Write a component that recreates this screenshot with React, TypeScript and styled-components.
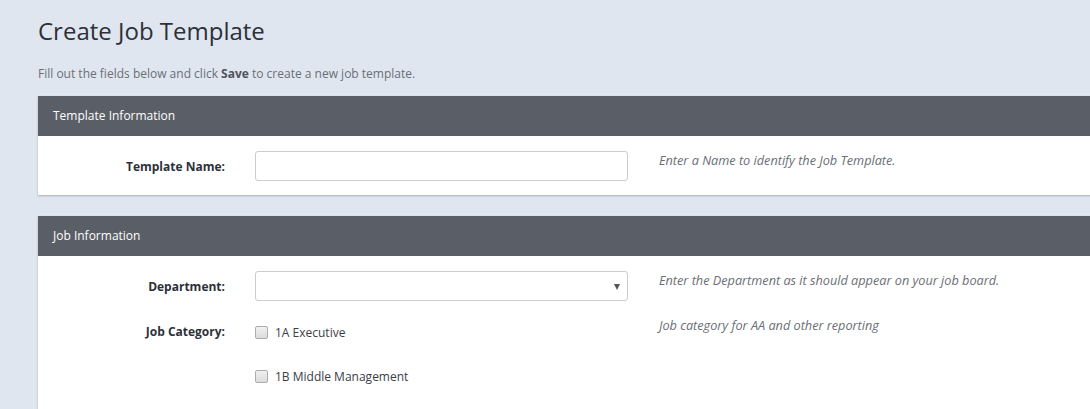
import React from 'react'
import styled, { createGlobalStyle } from 'styled-components'

const GlobalStyle = createGlobalStyle`
  html, body { margin: 0; padding: 0; background: #dfe6ef; overflow: hidden; }
  body { font-family: "Open Sans", "Liberation Sans", sans-serif; color: #333; }
  * { box-sizing: border-box; }
`

const Page = styled.div`
  padding: 14px 0 0 38px;
  width: 1110px;
`

const Title = styled.h1`
  margin: 0;
  font-size: 24px;
  font-weight: 400;
  line-height: 34px;
  color: #2d3038;
`

const Intro = styled.p`
  margin: 17px 0 13px;
  font-size: 12px;
  line-height: 18px;
  color: #6b6f76;
  b { color: #50545b; font-weight: 700; }
`

const Panel = styled.section`
  background: #fff;
  margin-bottom: 21px;
  box-shadow: 0 1px 2px rgba(0, 0, 0, 0.25);
`

const PanelHeader = styled.header`
  height: 40px;
  background: #5a5e66;
  color: #fff;
  font-size: 12px;
  line-height: 40px;
  padding-left: 15px;
`

const PanelBody = styled.div<{ $bottom?: number }>`
  padding: 15px 0 ${p => p.$bottom ?? 14}px;
`

const Row = styled.div<{ $tall?: boolean }>`
  display: flex;
  align-items: ${p => (p.$tall ? 'flex-start' : 'center')};
  min-height: 30px;
  margin-bottom: 15px;
  &:last-child { margin-bottom: 0; }
`

const Label = styled.label`
  width: 187px;
  text-align: right;
  font-size: 12px;
  font-weight: 700;
  color: #2d3038;
  flex-shrink: 0;
`

const Field = styled.div`
  width: 373px;
  margin-left: 30px;
  flex-shrink: 0;
  position: relative;
`

const TextInput = styled.input`
  width: 100%;
  height: 30px;
  border: 1px solid #c9ccd0;
  border-radius: 3px;
  background: #fff;
  font: inherit;
  outline: none;
`

const Select = styled.div`
  width: 100%;
  height: 30px;
  border: 1px solid #c9ccd0;
  border-radius: 3px;
  background: #fff;
  position: relative;
  &::after {
    content: '';
    position: absolute;
    right: 7px;
    top: 12px;
    border-left: 3px solid transparent;
    border-right: 3px solid transparent;
    border-top: 6px solid #555;
  }
`

const Help = styled.div`
  margin-left: 31px;
  font-size: 12.7px;
  font-style: italic;
  color: #6b6f76;
  align-self: flex-start;
`

const CheckList = styled.div`
  display: flex;
  flex-direction: column;
  gap: 26px;
  padding-top: 7px;
`

const CheckItem = styled.label`
  display: flex;
  align-items: center;
  gap: 7px;
  font-size: 12px;
  color: #3a3e45;
  height: 18px;
`

const Box = styled.span`
  width: 13px;
  height: 13px;
  border: 1px solid #a9acb0;
  border-radius: 2px;
  background: linear-gradient(#f0f0f0, #dcdcdc);
  flex-shrink: 0;
`

const CatLabel = styled(Label)`
  line-height: 18px;
  padding-top: 7px;
`

export default function App() {
  return (
    <>
      <GlobalStyle />
      <Page>
        <Title>Create Job Template</Title>
        <Intro>
          Fill out the fields below and click <b>Save</b> to create a new job template.
        </Intro>

        <Panel>
          <PanelHeader>Template Information</PanelHeader>
          <PanelBody>
            <Row>
              <Label>Template Name:</Label>
              <Field><TextInput /></Field>
              <Help>Enter a Name to identify the Job Template.</Help>
            </Row>
          </PanelBody>
        </Panel>

        <Panel>
          <PanelHeader>Job Information</PanelHeader>
          <PanelBody $bottom={40}>
            <Row>
              <Label>Department:</Label>
              <Field><Select /></Field>
              <Help>Enter the Department as it should appear on your job board.</Help>
            </Row>
            <Row $tall>
              <CatLabel>Job Category:</CatLabel>
              <Field>
                <CheckList>
                  <CheckItem><Box />1A Executive</CheckItem>
                  <CheckItem><Box />1B Middle Management</CheckItem>
                </CheckList>
              </Field>
              <Help>Job category for AA and other reporting</Help>
            </Row>
          </PanelBody>
        </Panel>
      </Page>
    </>
  )
}
